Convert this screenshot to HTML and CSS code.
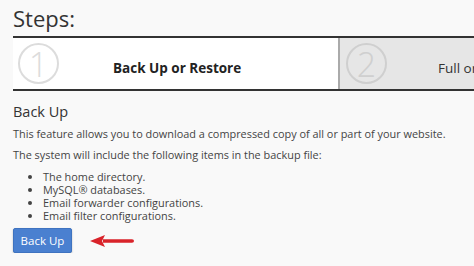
FILE: index.html
```html
<!DOCTYPE html>
<html>
<head>
<meta charset="utf-8">
<link rel="stylesheet" href="styles.css">
</head>
<body>
<div class="page">
  <h1 class="title">Steps:</h1>
  <div class="steps">
    <div class="step step-active">
      <span class="num">1</span>
      <span class="label label-bold">Back Up or Restore</span>
    </div>
    <div class="step step-next">
      <span class="num">2</span>
      <span class="label">Full or Partial Backup</span>
    </div>
  </div>
  <h2 class="sub">Back Up</h2>
  <p class="text">This feature allows you to download a compressed copy of all or part of your website.</p>
  <p class="text">The system will include the following items in the backup file:</p>
  <ul class="list">
    <li>The home directory.</li>
    <li>MySQL® databases.</li>
    <li>Email forwarder configurations.</li>
    <li>Email filter configurations.</li>
  </ul>
  <div class="actions">
    <button class="btn">Back Up</button>
    <svg class="arrow" width="46" height="14" viewBox="0 0 46 14">
      <path d="M14 5.2 H43 Q45 5.2 45 7 Q45 8.8 43 8.8 H14 Z" fill="#d9232a"/>
      <path d="M1 7 L16 1 L13 7 L16 13 Z" fill="#d9232a"/>
    </svg>
  </div>
</div>
</body>
</html>
```
FILE: styles.css
```css
html, body {
  margin: 0;
  padding: 0;
  background: #f9f9f9;
  overflow: hidden;
}
.page {
  font-family: "Open Sans", "Liberation Sans", sans-serif;
  color: #333;
  padding: 3px 0 0 13px;
  width: 461px;
  overflow: hidden;
}
.title {
  margin: 0;
  font-size: 22px;
  font-weight: 400;
  line-height: 31px;
  color: #333;
}
.steps {
  display: flex;
  margin-top: 2px;
  border-top: 2px solid #333;
  border-bottom: 2px solid #333;
  height: 51px;
  width: 600px;
}
.step {
  display: flex;
  align-items: center;
}
.step-active {
  width: 325px;
  background: #fff;
  border-right: 2px solid #aaa;
}
.step-next {
  flex: 1;
  background: #e6e6e6;
}
.num {
  width: 37px;
  height: 37px;
  border: 2px solid #dcdcdc;
  border-radius: 50%;
  margin-left: 5px;
  display: flex;
  align-items: center;
  justify-content: center;
  font-size: 34px;
  font-weight: 300;
  color: #dcdcdc;
  line-height: 1;
}
.step-next .num {
  border-color: #cfcfcf;
  color: #cfcfcf;
  margin-left: 6px;
}
.label {
  font-size: 13.5px;
  margin-top: 8px;
  white-space: nowrap;
}
.label-bold {
  font-weight: 700;
  margin-left: 54px;
  color: #222;
}
.step-next .label {
  margin-left: 51px;
}
.sub {
  margin: 11px 0 0;
  font-size: 14.5px;
  font-weight: 400;
  line-height: 20px;
}
.text {
  margin: 3px 0 0;
  font-size: 10.9px;
  line-height: 18px;
  color: #444;
}
.list {
  margin: 6px 0 0;
  padding-left: 30px;
  font-size: 10.9px;
  line-height: 13px;
  color: #444;
}
.actions {
  display: flex;
  align-items: center;
  margin-top: 6px;
}
.btn {
  font-family: "Open Sans", "Liberation Sans", sans-serif;
  background: #4a80d0;
  color: #fff;
  border: 1px solid #3f73c0;
  border-radius: 2px;
  font-size: 11.5px;
  height: 25px;
  width: 59px;
  padding: 0;
  box-shadow: 0 1px 2px rgba(0,0,0,0.25);
}
.arrow {
  margin-left: 17px;
}
```
